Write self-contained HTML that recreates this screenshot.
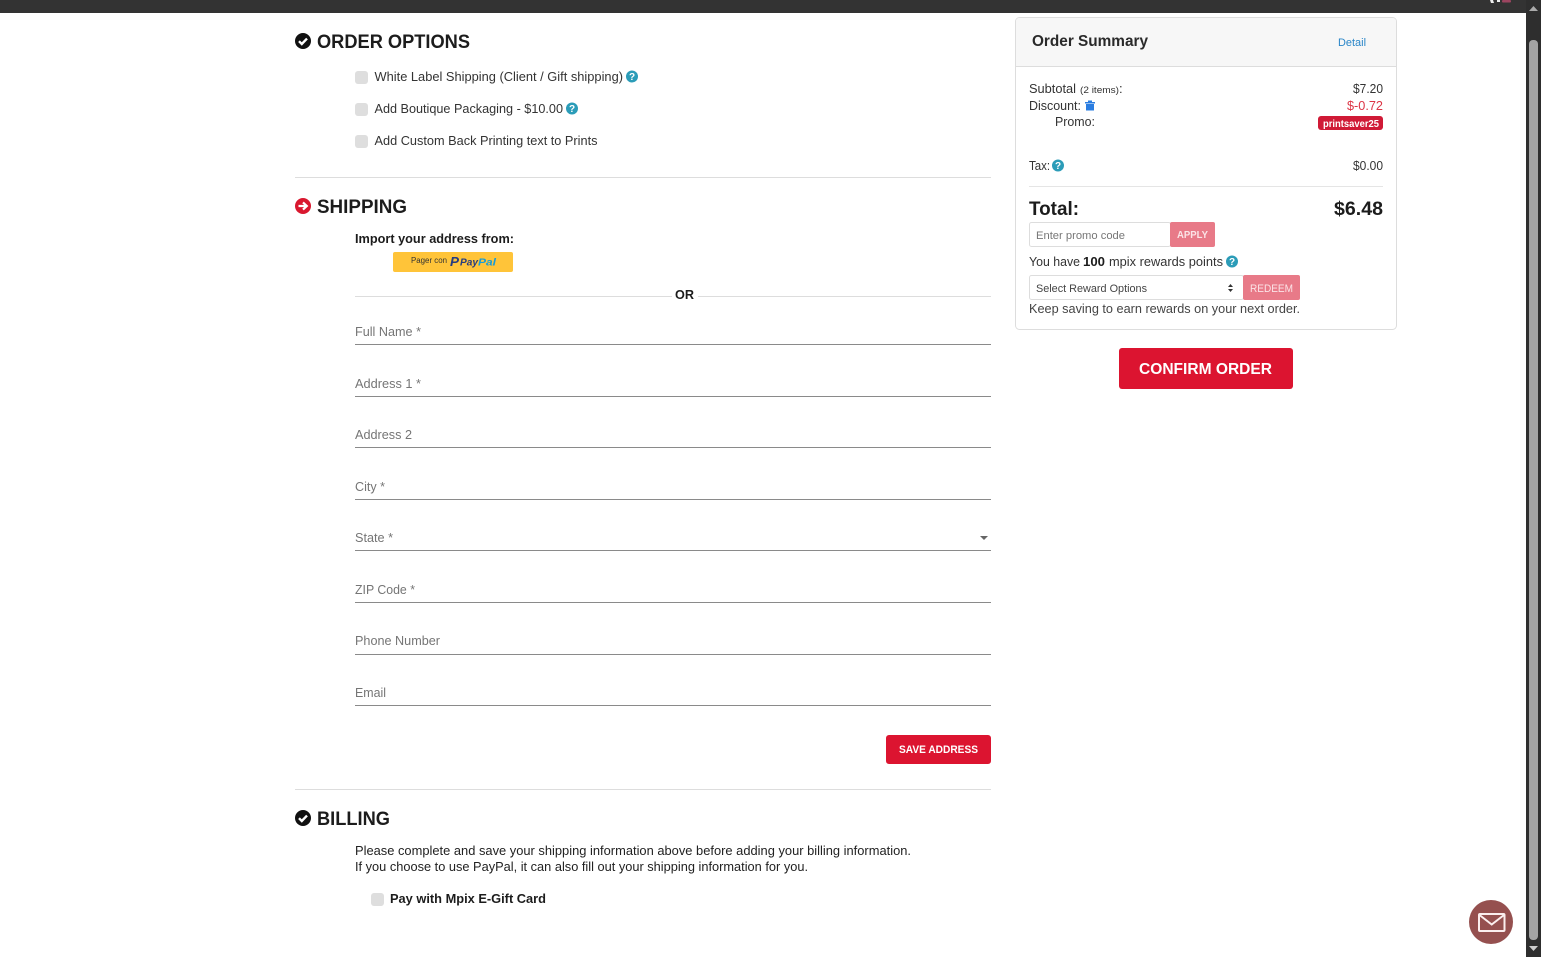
<!DOCTYPE html>
<html lang="en"><head><meta charset="utf-8"><title>Checkout</title>
<style>
html,body{margin:0;padding:0;width:1541px;height:957px;overflow:hidden;background:#fff}
svg{display:block}
text{font-family:"Liberation Sans",sans-serif;fill:#333;font-size:13px}
.b{font-weight:700;fill:#1c1c1c}
.h{font-size:19px;font-weight:700;fill:#1c1c1c}
.l{fill:#757575;font-size:13px}
.f{stroke:#8a8a8a;stroke-width:1}
.q{font-size:10px;font-weight:700;fill:#fff;text-anchor:middle}
</style></head><body>
<svg width="1541" height="957" viewBox="0 0 1541 957" xmlns="http://www.w3.org/2000/svg">
<defs>
<g id="help"><circle r="6" fill="#2b9cb8"/><text class="q" y="3.500">?</text></g>
<g id="ok"><circle r="8" fill="#111"/><path d="M-4 0.2L-1.2 3L4 -2.400" fill="none" stroke="#fff" stroke-width="2.400"/></g>
</defs>

<!-- top bar & scrollbar -->
<rect width="1541" height="13" fill="#333"/>
<path d="M1490 0H1493L1494 3H1491ZM1497 0H1500V2H1497Z" fill="#eee"/>
<rect x="1502" y="0" width="9" height="2.500" rx="1" fill="#9c4560"/>
<rect x="1526" y="0" width="15" height="957" fill="#2e2e2e"/>
<rect x="1529" y="40" width="9" height="900" rx="4" fill="#a3a3a3"/>
<path d="M1533.500 6L1538 11H1529Z" fill="#aaa"/>
<path d="M1529 946H1538L1533.500 951Z" fill="#ccc"/>

<!-- order options -->
<use href="#ok" x="303" y="41"/>
<text class="h" x="317" y="48" textLength="153" lengthAdjust="spacingAndGlyphs">ORDER OPTIONS</text>
<rect x="355" y="71" width="13" height="13" rx="3" fill="#dedede"/>
<text x="374.500" y="81" textLength="248.500" lengthAdjust="spacingAndGlyphs">White Label Shipping (Client / Gift shipping)</text>
<use href="#help" x="632" y="76.500"/>
<rect x="355" y="103" width="13" height="13" rx="3" fill="#dedede"/>
<text x="374.500" y="113" textLength="188.500" lengthAdjust="spacingAndGlyphs">Add Boutique Packaging - $10.00</text>
<use href="#help" x="572" y="108.500"/>
<rect x="355" y="135" width="13" height="13" rx="3" fill="#dedede"/>
<text x="374.500" y="145" textLength="223" lengthAdjust="spacingAndGlyphs">Add Custom Back Printing text to Prints</text>
<rect x="295" y="177" width="696" height="1" fill="#ddd"/>

<!-- shipping -->
<circle cx="303" cy="206" r="8" fill="#d9182f"/>
<path d="M-4.500 0H3.500M0 -3.600L3.800 0L0 3.600" transform="translate(303 206)" fill="none" stroke="#fff" stroke-width="2.200"/>
<text class="h" x="317" y="213" textLength="90" lengthAdjust="spacingAndGlyphs">SHIPPING</text>
<text class="b" x="355" y="243" textLength="159" lengthAdjust="spacingAndGlyphs">Import your address from:</text>
<rect x="393" y="252" width="120" height="20" rx="2" fill="#ffc439"/>
<text x="411" y="263" style="font-size:8px" textLength="36" lengthAdjust="spacingAndGlyphs">Pager con</text>
<text x="450" y="266" style="font-size:13px;font-weight:700;font-style:italic;fill:#253b80" textLength="9" lengthAdjust="spacingAndGlyphs">P</text>
<text x="460" y="265.500" style="font-size:10px;font-weight:700;font-style:italic;fill:#253b80" textLength="18" lengthAdjust="spacingAndGlyphs">Pay</text>
<text x="478" y="265.500" style="font-size:10px;font-weight:700;font-style:italic;fill:#179bd7" textLength="18" lengthAdjust="spacingAndGlyphs">Pal</text>
<rect x="355" y="296" width="317" height="1" fill="#ddd"/><rect x="698" y="296" width="293" height="1" fill="#ddd"/>
<text class="b" x="675" y="299" textLength="19" lengthAdjust="spacingAndGlyphs">OR</text>

<text class="l" x="355" y="336" textLength="66" lengthAdjust="spacingAndGlyphs">Full Name *</text>
<line class="f" x1="355" x2="991" y1="344.500" y2="344.500"/>
<text class="l" x="355" y="388" textLength="66" lengthAdjust="spacingAndGlyphs">Address 1 *</text>
<line class="f" x1="355" x2="991" y1="396.500" y2="396.500"/>
<text class="l" x="355" y="439" textLength="57" lengthAdjust="spacingAndGlyphs">Address 2</text>
<line class="f" x1="355" x2="991" y1="447.500" y2="447.500"/>
<text class="l" x="355" y="491" textLength="30" lengthAdjust="spacingAndGlyphs">City *</text>
<line class="f" x1="355" x2="991" y1="499.500" y2="499.500"/>
<text class="l" x="355" y="542" textLength="38" lengthAdjust="spacingAndGlyphs">State *</text>
<path d="M980 536H988L984 540Z" fill="#666"/>
<line class="f" x1="355" x2="991" y1="550.500" y2="550.500"/>
<text class="l" x="355" y="594" textLength="60" lengthAdjust="spacingAndGlyphs">ZIP Code *</text>
<line class="f" x1="355" x2="991" y1="602.500" y2="602.500"/>
<text class="l" x="355" y="645" textLength="85" lengthAdjust="spacingAndGlyphs">Phone Number</text>
<line class="f" x1="355" x2="991" y1="654.500" y2="654.500"/>
<text class="l" x="355" y="697" textLength="31" lengthAdjust="spacingAndGlyphs">Email</text>
<line class="f" x1="355" x2="991" y1="705.500" y2="705.500"/>

<rect x="886" y="735" width="105" height="29" rx="3" fill="#dc1430"/>
<text x="899" y="753" style="font-size:11px;font-weight:700;fill:#fff" textLength="79" lengthAdjust="spacingAndGlyphs">SAVE ADDRESS</text>
<rect x="295" y="789" width="696" height="1" fill="#ddd"/>

<!-- billing -->
<use href="#ok" x="303" y="818"/>
<text class="h" x="317" y="825" textLength="73" lengthAdjust="spacingAndGlyphs">BILLING</text>
<text x="355" y="855" style="fill:#222" textLength="556" lengthAdjust="spacingAndGlyphs">Please complete and save your shipping information above before adding your billing information.</text>
<text x="355" y="871" style="fill:#222" textLength="453" lengthAdjust="spacingAndGlyphs">If you choose to use PayPal, it can also fill out your shipping information for you.</text>
<rect x="371" y="893" width="13" height="13" rx="3" fill="#dedede"/>
<text class="b" x="390" y="903" textLength="156" lengthAdjust="spacingAndGlyphs">Pay with Mpix E-Gift Card</text>

<!-- summary panel -->
<rect x="1015.500" y="17.500" width="381" height="312" rx="4" fill="#fff" stroke="#ddd"/>
<path d="M1016 66V21.500Q1016 18 1019.500 18H1392.500Q1396 18 1396 21.500V66Z" fill="#f7f7f7"/>
<rect x="1016" y="66" width="380" height="1" fill="#ddd"/>
<text x="1032" y="46" style="font-size:16px;fill:#2a2a2a;font-weight:700" textLength="116" lengthAdjust="spacingAndGlyphs">Order Summary</text>
<text x="1338" y="46" style="font-size:11px;fill:#2a86c8" textLength="28" lengthAdjust="spacingAndGlyphs">Detail</text>

<text x="1029" y="93" textLength="47" lengthAdjust="spacingAndGlyphs">Subtotal</text>
<text x="1080" y="93" style="font-size:9px" textLength="39" lengthAdjust="spacingAndGlyphs">(2 items)</text>
<text x="1119" y="93">:</text>
<text x="1353" y="93" textLength="30" lengthAdjust="spacingAndGlyphs">$7.20</text>
<text x="1029" y="110" textLength="52" lengthAdjust="spacingAndGlyphs">Discount:</text>
<path d="M1085 102H1095V103.500H1085ZM1088 100.500H1092V102H1088ZM1086 104H1094V110.500H1086Z" fill="#2a7de1"/>
<text x="1347" y="110" style="fill:#dc3545" textLength="36" lengthAdjust="spacingAndGlyphs">$-0.72</text>
<text x="1055" y="126" textLength="40" lengthAdjust="spacingAndGlyphs">Promo:</text>
<rect x="1318" y="116" width="65" height="14" rx="3" fill="#d01a36"/>
<text x="1323" y="127" style="font-size:10px;font-weight:700;fill:#fff" textLength="56" lengthAdjust="spacingAndGlyphs">printsaver25</text>
<text x="1029" y="170" textLength="21" lengthAdjust="spacingAndGlyphs">Tax:</text>
<use href="#help" x="1058" y="165.500"/>
<text x="1353" y="170" textLength="30" lengthAdjust="spacingAndGlyphs">$0.00</text>
<rect x="1029" y="186" width="354" height="1" fill="#e5e5e5"/>
<text class="h" x="1029" y="215" textLength="50" lengthAdjust="spacingAndGlyphs">Total:</text>
<text class="h" x="1334" y="215" textLength="49" lengthAdjust="spacingAndGlyphs">$6.48</text>

<rect x="1029.500" y="222.500" width="141" height="24" rx="2" fill="#fff" stroke="#ddd"/>
<text x="1036" y="239" style="font-size:11px;fill:#777" textLength="89" lengthAdjust="spacingAndGlyphs">Enter promo code</text>
<rect x="1170" y="222" width="45" height="25" rx="2" fill="#e87a88"/>
<text x="1177" y="238" style="font-size:10px;font-weight:700;fill:#fbe4e7" textLength="31" lengthAdjust="spacingAndGlyphs">APPLY</text>

<text x="1029" y="266" textLength="51" lengthAdjust="spacingAndGlyphs">You have</text>
<text class="b" x="1083" y="266" textLength="22" lengthAdjust="spacingAndGlyphs">100</text>
<text x="1109" y="266" textLength="114" lengthAdjust="spacingAndGlyphs">mpix rewards points</text>
<use href="#help" x="1232" y="261.500"/>

<rect x="1029.500" y="275.500" width="214" height="24" rx="2" fill="#fff" stroke="#ddd"/>
<text x="1036" y="292" style="font-size:11px;fill:#444" textLength="111" lengthAdjust="spacingAndGlyphs">Select Reward Options</text>
<path d="M1228 287H1233L1230.500 284ZM1228 289H1233L1230.500 292Z" fill="#333"/>
<rect x="1243" y="275" width="57" height="25" rx="2" fill="#e87a88"/>
<text x="1250" y="292" style="font-size:11px;fill:#fbe4e7" textLength="43" lengthAdjust="spacingAndGlyphs">REDEEM</text>
<text x="1029" y="313" style="fill:#444" textLength="271" lengthAdjust="spacingAndGlyphs">Keep saving to earn rewards on your next order.</text>

<rect x="1119" y="348" width="174" height="41" rx="3" fill="#dc1430"/>
<text x="1139" y="374" style="font-size:16px;font-weight:700;fill:#fff" textLength="133" lengthAdjust="spacingAndGlyphs">CONFIRM ORDER</text>

<!-- chat button -->
<circle cx="1491" cy="922" r="22" fill="#95504f"/>
<rect x="1479" y="914" width="25.500" height="17" rx="1" fill="none" stroke="#fbeeee" stroke-width="2"/>
<path d="M1479.500 915L1491.700 924.500L1504 915" fill="none" stroke="#fbeeee" stroke-width="2"/>
</svg>
</body></html>
